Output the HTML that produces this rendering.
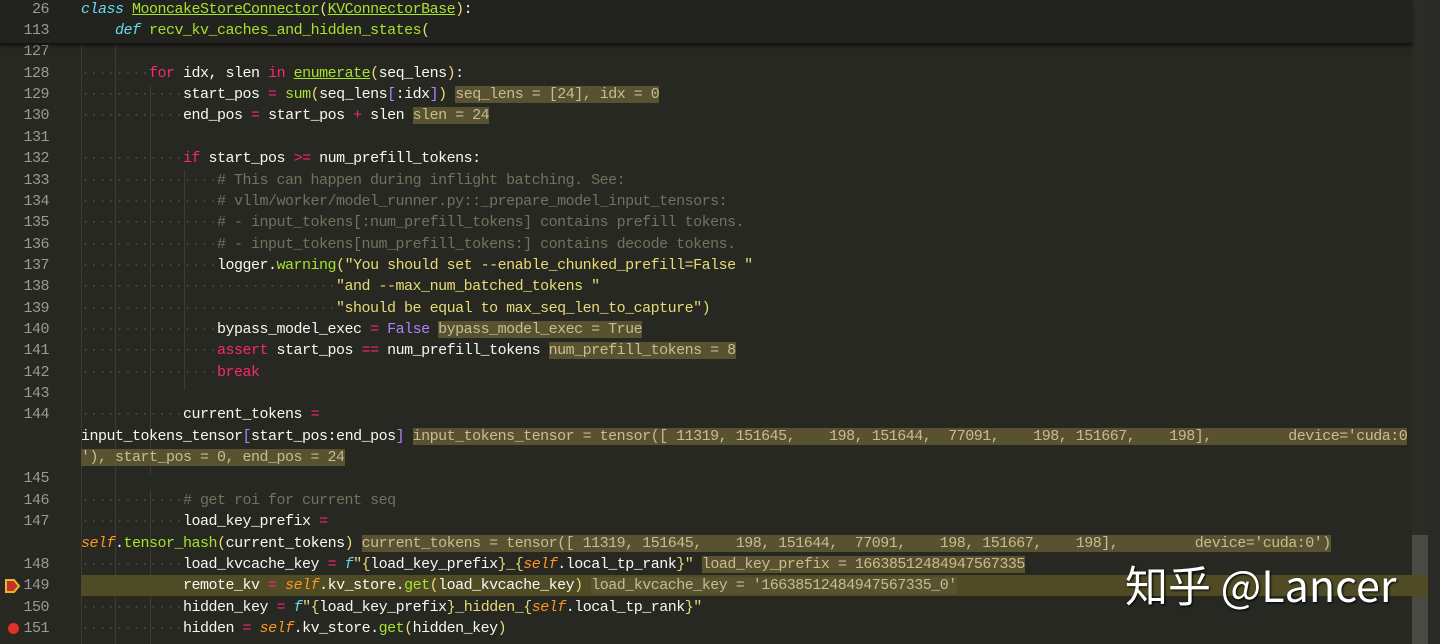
<!DOCTYPE html>
<html><head><meta charset="utf-8"><style>
body{margin:0;width:1440px;height:644px;background:#272822;overflow:hidden;position:relative;font-family:"Liberation Mono",monospace;font-size:15px;letter-spacing:-0.5px;color:#f8f8f2}
.r{position:absolute;left:0;height:21.4px;line-height:21.4px;white-space:pre;width:1428px}
.n{position:absolute;left:0;width:49px;text-align:right;color:#9a9b94}
.c{position:absolute;left:81px}
.d{color:#44443c}
.k{color:#f92672}.i{color:#66d9ef;font-style:italic}.g{color:#a6e22e}.u{text-decoration:underline}
.s{color:#e6db74}.cm{color:#75715e}.p{color:#ae81ff}.sf{color:#fd971f;font-style:italic}.y{color:#e6db74}
.h{background:#595230;color:#c8bd90}
#hdr{position:absolute;left:0;top:0;width:1412px;height:43px;background:#22221e;border-bottom:1px solid #111;box-shadow:0 2px 3px rgba(0,0,0,.5);z-index:2}
.cur{background:#4e4b25}
.gl{position:absolute;width:1px;background:#3c3c35}
</style></head><body>
<div style="position:absolute;left:1412px;top:0;width:16px;height:644px;background:#2c2c27"></div>
<div style="position:absolute;left:1412px;top:535px;width:16px;height:109px;background:#4a4a45"></div>
<div style="position:absolute;left:1428px;top:0;width:12px;height:644px;background:#2a2a26"></div>

<div class="gl" style="left:81px;top:44px;height:600px"></div>
<div class="gl" style="left:115px;top:44px;height:600px"></div>
<div class="gl" style="left:150px;top:85px;height:390px"></div>
<div class="gl" style="left:150px;top:490px;height:154px"></div>
<div class="gl" style="left:184px;top:170px;height:220px"></div>

<div id="hdr">
<div class="r" style="top:-1px"><span class="n">26</span><span class="c"><span class="i">class</span> <span class="g u">MooncakeStoreConnector</span><span class="y">(</span><span class="g u">KVConnectorBase</span><span class="y">)</span>:</span></div>
<div class="r" style="top:20px"><span class="n">113</span><span class="c">    <span class="i">def</span> <span class="g">recv_kv_caches_and_hidden_states</span><span class="y">(</span></span></div>
</div>

<div class="r" style="top:41px"><span class="n">127</span></div>
<div class="r" style="top:63px"><span class="n">128</span><span class="c"><span class="d">········</span><span class="k">for</span> idx, slen <span class="k">in</span> <span class="g u">enumerate</span><span class="y">(</span>seq_lens<span class="y">)</span>:</span></div>
<div class="r" style="top:84px"><span class="n">129</span><span class="c"><span class="d">············</span>start_pos <span class="k">=</span> <span class="g">sum</span><span class="y">(</span>seq_lens<span class="p">[</span>:idx<span class="p">]</span><span class="y">)</span> <span class="h">seq_lens = [24], idx = 0</span></span></div>
<div class="r" style="top:105px"><span class="n">130</span><span class="c"><span class="d">············</span>end_pos <span class="k">=</span> start_pos <span class="k">+</span> slen <span class="h">slen = 24</span></span></div>
<div class="r" style="top:127px"><span class="n">131</span></div>
<div class="r" style="top:148px"><span class="n">132</span><span class="c"><span class="d">············</span><span class="k">if</span> start_pos <span class="k">&gt;=</span> num_prefill_tokens:</span></div>
<div class="r" style="top:170px"><span class="n">133</span><span class="c"><span class="d">················</span><span class="cm"># This can happen during inflight batching. See:</span></span></div>
<div class="r" style="top:191px"><span class="n">134</span><span class="c"><span class="d">················</span><span class="cm"># vllm/worker/model_runner.py::_prepare_model_input_tensors:</span></span></div>
<div class="r" style="top:212px"><span class="n">135</span><span class="c"><span class="d">················</span><span class="cm"># - input_tokens[:num_prefill_tokens] contains prefill tokens.</span></span></div>
<div class="r" style="top:234px"><span class="n">136</span><span class="c"><span class="d">················</span><span class="cm"># - input_tokens[num_prefill_tokens:] contains decode tokens.</span></span></div>
<div class="r" style="top:255px"><span class="n">137</span><span class="c"><span class="d">················</span>logger.<span class="g">warning</span><span class="y">(</span><span class="s">"You should set --enable_chunked_prefill=False "</span></span></div>
<div class="r" style="top:276px"><span class="n">138</span><span class="c"><span class="d">······························</span><span class="s">"and --max_num_batched_tokens "</span></span></div>
<div class="r" style="top:298px"><span class="n">139</span><span class="c"><span class="d">······························</span><span class="s">"should be equal to max_seq_len_to_capture"</span><span class="y">)</span></span></div>
<div class="r" style="top:319px"><span class="n">140</span><span class="c"><span class="d">················</span>bypass_model_exec <span class="k">=</span> <span class="p">False</span> <span class="h">bypass_model_exec = True</span></span></div>
<div class="r" style="top:340px"><span class="n">141</span><span class="c"><span class="d">················</span><span class="k">assert</span> start_pos <span class="k">==</span> num_prefill_tokens <span class="h">num_prefill_tokens = 8</span></span></div>
<div class="r" style="top:362px"><span class="n">142</span><span class="c"><span class="d">················</span><span class="k">break</span></span></div>
<div class="r" style="top:383px"><span class="n">143</span></div>
<div class="r" style="top:404px"><span class="n">144</span><span class="c"><span class="d">············</span>current_tokens <span class="k">=</span></span></div>
<div class="r" style="top:426px"><span class="c">input_tokens_tensor<span class="p">[</span>start_pos:end_pos<span class="p">]</span> <span class="h">input_tokens_tensor = tensor([ 11319, 151645,    198, 151644,  77091,    198, 151667,    198],         device='cuda:0</span></span></div>
<div class="r" style="top:447px"><span class="c"><span class="h">'), start_pos = 0, end_pos = 24</span></span></div>
<div class="r" style="top:468px"><span class="n">145</span></div>
<div class="r" style="top:490px"><span class="n">146</span><span class="c"><span class="d">············</span><span class="cm"># get roi for current seq</span></span></div>
<div class="r" style="top:511px"><span class="n">147</span><span class="c"><span class="d">············</span>load_key_prefix <span class="k">=</span></span></div>
<div class="r" style="top:533px"><span class="c"><span class="sf">self</span>.<span class="g">tensor_hash</span><span class="y">(</span>current_tokens<span class="y">)</span> <span class="h">current_tokens = tensor([ 11319, 151645,    198, 151644,  77091,    198, 151667,    198],         device='cuda:0')</span></span></div>
<div class="r" style="top:554px"><span class="n">148</span><span class="c"><span class="d">············</span>load_kvcache_key <span class="k">=</span> <span class="i">f</span><span class="s">"</span><span class="y">{</span>load_key_prefix<span class="y">}</span><span class="s">_</span><span class="y">{</span><span class="sf">self</span>.local_tp_rank<span class="y">}</span><span class="s">"</span> <span class="h">load_key_prefix = 16638512484947567335</span></span></div>
<div class="r" style="top:575px"><div style="position:absolute;left:81px;top:0;width:1347px;height:21.4px" class="cur"></div><span class="n">149</span><span class="c"><span class="d">············</span>remote_kv <span class="k">=</span> <span class="sf">self</span>.kv_store.<span class="g">get</span><span class="y">(</span>load_kvcache_key<span class="y">)</span> <span class="h">load_kvcache_key = '16638512484947567335_0'</span></span></div>
<div class="r" style="top:597px"><span class="n">150</span><span class="c"><span class="d">············</span>hidden_key <span class="k">=</span> <span class="i">f</span><span class="s">"</span><span class="y">{</span>load_key_prefix<span class="y">}</span><span class="s">_hidden_</span><span class="y">{</span><span class="sf">self</span>.local_tp_rank<span class="y">}</span><span class="s">"</span></span></div>
<div class="r" style="top:618px"><span class="n">151</span><span class="c"><span class="d">············</span>hidden <span class="k">=</span> <span class="sf">self</span>.kv_store.<span class="g">get</span><span class="y">(</span>hidden_key<span class="y">)</span></span></div>

<svg style="position:absolute;left:4px;top:578px" width="18" height="16"><path d="M2 2h8l5 6-5 6H2z" fill="#c7302a" stroke="#e8b62c" stroke-width="2"/></svg>
<div style="position:absolute;left:8px;top:623px;width:11px;height:11px;border-radius:50%;background:#e0312a"></div>

<div style="position:absolute;left:1125px;top:556px;font-family:'Noto Sans CJK SC',sans-serif;font-size:43px;letter-spacing:0;line-height:56px;color:#fff;text-shadow:1px 1px 2px #000;white-space:pre">知乎 @Lancer</div>
</body></html>
